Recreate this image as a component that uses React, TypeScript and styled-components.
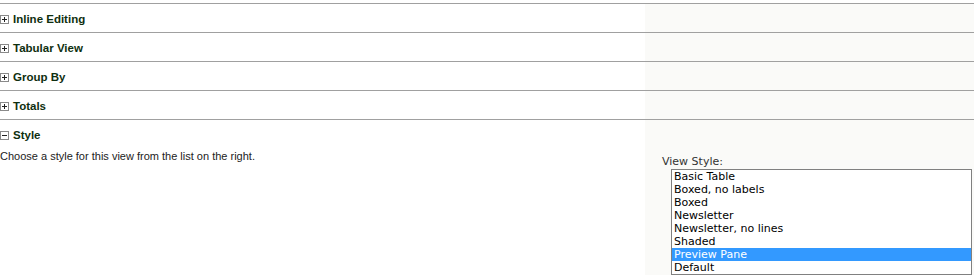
import React from "react";
import styled, { createGlobalStyle } from "styled-components";

const Global = createGlobalStyle`
  html, body { margin: 0; padding: 0; background: #ffffff; }
  body { font-family: "DejaVu Sans", Verdana, sans-serif; }
`;

const Page = styled.div`
  padding-top: 3px;
  width: 974px;
`;

const Section = styled.div`
  display: grid;
  grid-template-columns: 645px 1fr;
  border-top: 1px solid #a0a0a0;
`;

const Left = styled.div`
  display: flex;
  flex-direction: column;
`;

const Right = styled.div<{ $expanded?: boolean }>`
  background: #fafaf8;
  display: flex;
  flex-direction: column;
  padding: ${(p) => (p.$expanded ? "35px 2px 0 17px" : "0")};
`;

const Header = styled.div`
  height: 28px;
  padding-top: 2px;
  box-sizing: border-box;
  display: flex;
  align-items: center;
  gap: 4px;
  font-family: "Liberation Sans", Tahoma, sans-serif;
  font-weight: bold;
  font-size: 11.5px;
  color: #0f2f0f;
`;

const Toggle = styled.svg`
  width: 9px;
  height: 9px;
  flex: none;
`;

const Description = styled.div`
  font-family: "Liberation Sans", Tahoma, sans-serif;
  font-size: 11px;
  color: #222;
  margin-top: 2px;
`;

const Label = styled.div`
  font-family: "DejaVu Sans", Verdana, sans-serif;
  font-size: 11px;
  color: #333;
  line-height: 13px;
  margin-bottom: 1px;
`;

const ListBox = styled.div`
  margin-left: 9px;
  border: 1px solid #808080;
  background: #fff;
  display: flex;
  flex-direction: column;
`;

const Option = styled.div<{ $selected?: boolean }>`
  height: 13px;
  line-height: 13px;
  padding-left: 2px;
  font-family: "DejaVu Sans", Verdana, sans-serif;
  font-size: 11px;
  color: ${(p) => (p.$selected ? "#fff" : "#000")};
  background: ${(p) => (p.$selected ? "#3399ff" : "transparent")};
  white-space: nowrap;
`;

const Icon = ({ open }: { open?: boolean }) => (
  <Toggle viewBox="0 0 9 9">
    <rect x="0.5" y="0.5" width="8" height="8" fill="#fff" stroke="#8a8a8a" />
    <line x1="2" y1="4.5" x2="7" y2="4.5" stroke="#222" />
    {!open && <line x1="4.5" y1="2" x2="4.5" y2="7" stroke="#222" />}
  </Toggle>
);

const collapsed = ["Inline Editing", "Tabular View", "Group By", "Totals"];
const styles = [
  "Basic Table",
  "Boxed, no labels",
  "Boxed",
  "Newsletter",
  "Newsletter, no lines",
  "Shaded",
  "Preview Pane",
  "Default",
];

export default function App() {
  return (
    <>
      <Global />
      <Page>
        {collapsed.map((t) => (
          <Section key={t}>
            <Left>
              <Header>
                <Icon />
                {t}
              </Header>
            </Left>
            <Right />
          </Section>
        ))}
        <Section>
          <Left>
            <Header>
              <Icon open />
              Style
            </Header>
            <Description>Choose a style for this view from the list on the right.</Description>
          </Left>
          <Right $expanded>
            <Label>View Style:</Label>
            <ListBox role="listbox">
              {styles.map((s) => (
                <Option key={s} $selected={s === "Preview Pane"}>
                  {s}
                </Option>
              ))}
            </ListBox>
          </Right>
        </Section>
      </Page>
    </>
  );
}
